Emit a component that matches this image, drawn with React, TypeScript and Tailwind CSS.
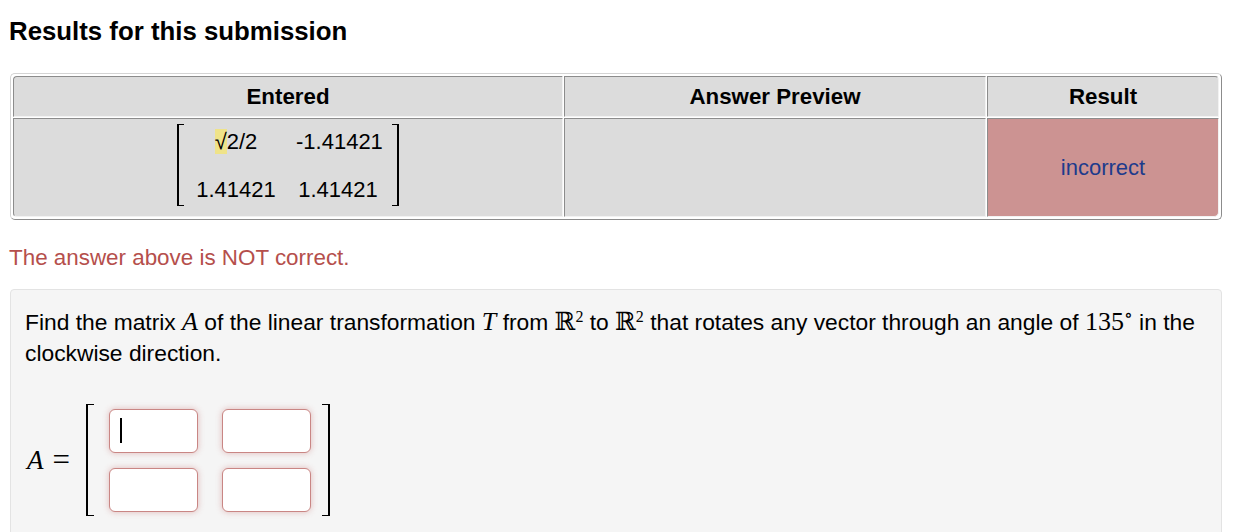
import React from "react";

const MATH = "font-['Liberation_Serif','DejaVu_Serif',serif]";

function Bracket({ side, className }: { side: "l" | "r"; className: string }) {
  return (
    <div
      className={`${className} w-[7px] border-y-[1.5px] border-black ${
        side === "l" ? "border-l-[2.5px]" : "border-r-[2.5px]"
      }`}
    />
  );
}

function AnswerBox({ caret }: { caret?: boolean }) {
  return (
    <div className="flex h-[44px] w-[89px] items-center rounded-[6px] border border-[#c98684] bg-white pl-[10px] shadow-[0_0_6px_rgba(200,110,110,0.45)]">
      {caret && <span className="h-[25px] w-[2px] bg-black" />}
    </div>
  );
}

export default function App() {
  const entered = [
    [
      <span key="a">
        <span className="bg-[#efe389]">√</span>2/2
      </span>,
      "-1.41421",
    ],
    ["1.41421", "1.41421"],
  ];

  return (
    <div className="min-h-[532px] bg-white pl-[10px] pr-[34px] font-['Liberation_Sans',Arial,sans-serif] text-black">
      <h2 className="pt-[15px] text-[25.8px] font-bold leading-[32px] -ml-[1px]">
        Results for this submission
      </h2>

      {/* Results table */}
      <div className="mt-[26px] rounded-[5px] border border-t-[#d4d4d4] border-l-[#d4d4d4] border-b-[#8c8c8c] border-r-[#8c8c8c] p-px">
        <table className="w-full table-fixed border-separate border-spacing-[1px]">
          <colgroup>
            <col className="w-[550px]" />
            <col className="w-[422px]" />
            <col />
          </colgroup>
          <thead>
            <tr className="h-[41px] text-[22.3px] font-bold">
              <th className="rounded-tl-[4px] border border-t-[#8c8c8c] border-l-[#8c8c8c] border-b-[#f2f2f2] border-r-[#f2f2f2] bg-[#dcdcdc]">
                Entered
              </th>
              <th className="border border-t-[#8c8c8c] border-l-[#8c8c8c] border-b-[#f2f2f2] border-r-[#f2f2f2] bg-[#dcdcdc]">
                Answer Preview
              </th>
              <th className="rounded-tr-[4px] border border-t-[#8c8c8c] border-l-[#8c8c8c] border-b-[#f2f2f2] border-r-[#f2f2f2] bg-[#dcdcdc]">
                Result
              </th>
            </tr>
          </thead>
          <tbody>
            <tr className="h-[99px] text-[22px]">
              <td className="rounded-bl-[4px] border border-t-[#8c8c8c] border-l-[#8c8c8c] border-b-[#f2f2f2] border-r-[#f2f2f2] bg-[#dcdcdc]">
                <div className="flex justify-center pb-[5px]">
                  <div className="flex items-stretch gap-[12px]">
                    <Bracket side="l" className="h-[82px]" />
                    <div className="grid grid-cols-[80px_84px] content-between gap-x-[20px] pt-[5px] pb-[3px] leading-[26px]">
                      {entered.flat().map((c, i) => (
                        <div key={i} className="text-center">
                          {c}
                        </div>
                      ))}
                    </div>
                    <Bracket side="r" className="h-[82px]" />
                  </div>
                </div>
              </td>
              <td className="border border-t-[#8c8c8c] border-l-[#8c8c8c] border-b-[#f2f2f2] border-r-[#f2f2f2] bg-[#dcdcdc]" />
              <td className="rounded-br-[5px] border border-t-[#8c8c8c] border-l-[#8c8c8c] border-b-[#f2f2f2] border-r-[#f2f2f2] bg-[#cc9392] text-center text-[#1d3b8c]">
                incorrect
              </td>
            </tr>
          </tbody>
        </table>
      </div>

      <p className="mt-[24px] text-[22.4px] leading-[28px] text-[#b54f4c] -ml-[1px]">
        The answer above is NOT correct.
      </p>

      {/* Problem */}
      <div className="mt-[17px] min-h-[260px] rounded-[4px] border border-[#e3e3e3] bg-[#f5f5f5] px-[14px] pt-[16px]">
        <p className="text-[22.8px] leading-[31px]">
          Find the matrix <span className={`${MATH} text-[26px] italic`}>A</span> of the
          linear transformation <span className={`${MATH} text-[26px] italic`}>T</span> from{" "}
          <span className={`${MATH} text-[25px]`}>
            ℝ<sup className="text-[16px]">2</sup>
          </span>{" "}
          to{" "}
          <span className={`${MATH} text-[25px]`}>
            ℝ<sup className="text-[16px]">2</sup>
          </span>{" "}
          that rotates any vector through an angle of{" "}
          <span className={`${MATH} text-[26px]`}>
            135<sup className="text-[18px]">∘</sup>
          </span>{" "}
          in the clockwise direction.
        </p>

        <div className="mt-[35px] flex items-center">
          <span className={`${MATH} ml-[2px] flex items-center text-[27px]`}>
            <span className="italic">A</span>
            <span className="ml-[9px] text-[31px]">=</span>
          </span>
          <Bracket side="l" className="ml-[16px] h-[112px] w-[8px]" />
          <div className="ml-[15px] grid grid-cols-[89px_89px] gap-x-[24px] gap-y-[15px]">
            <AnswerBox caret />
            <AnswerBox />
            <AnswerBox />
            <AnswerBox />
          </div>
          <Bracket side="r" className="ml-[11px] h-[112px] w-[8px]" />
        </div>
      </div>
    </div>
  );
}
